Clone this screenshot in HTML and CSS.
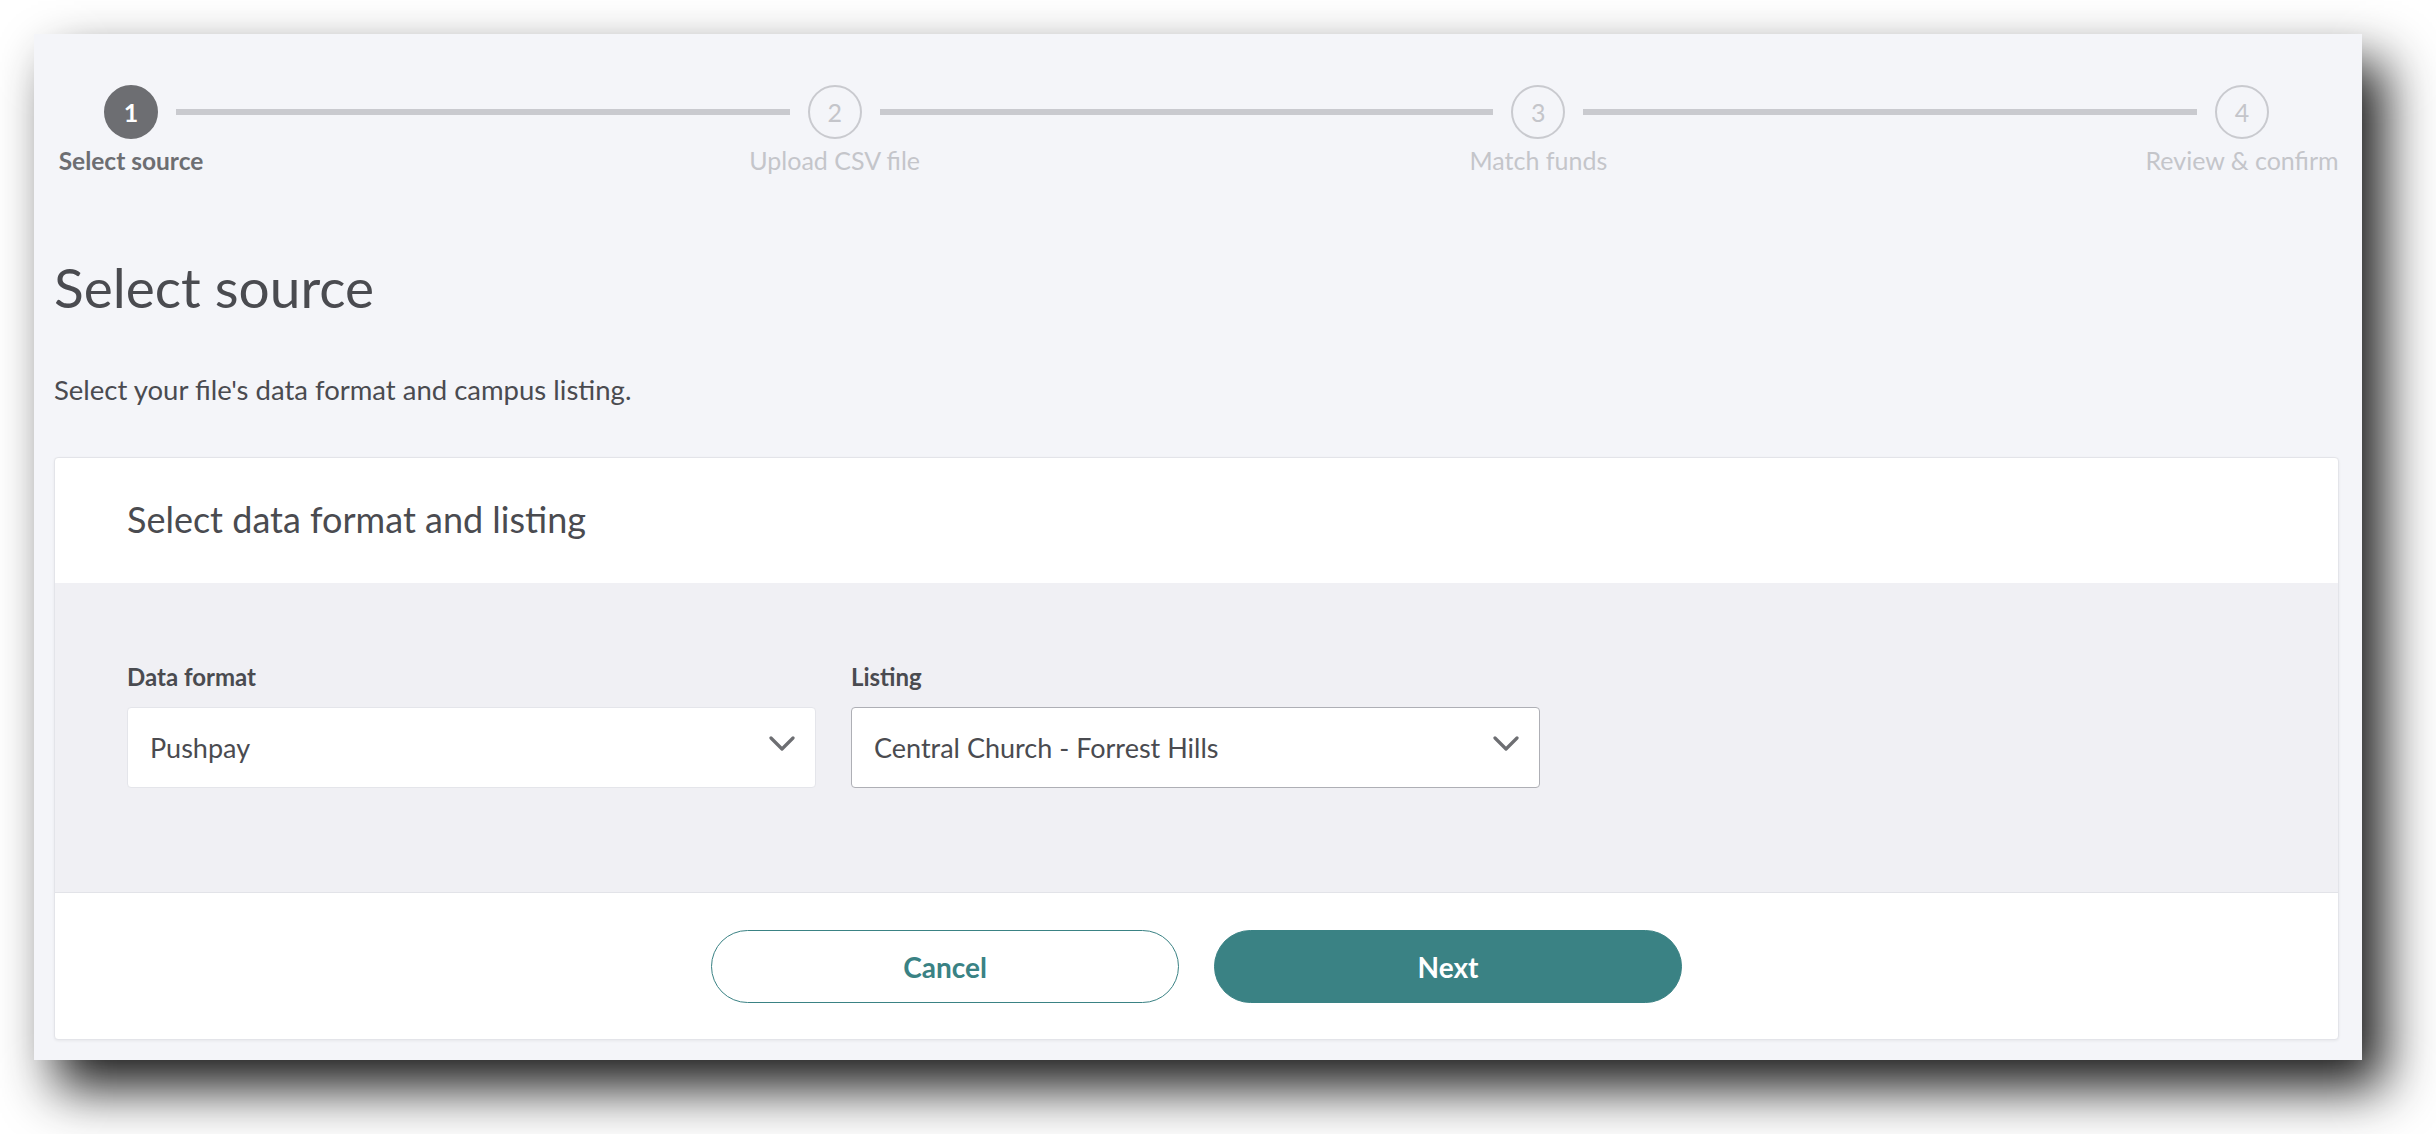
FILE: index.html
```html
<!DOCTYPE html>
<html lang="en">
<head>
<meta charset="utf-8">
<title>Select source</title>
<link rel="stylesheet" href="styles.css">
</head>
<body>
<div class="window">
  <div class="stepper">
    <div class="step active">
      <div class="circle">1</div>
      <div class="step-label">Select source</div>
    </div>
    <div class="line"></div>
    <div class="step">
      <div class="circle">2</div>
      <div class="step-label">Upload CSV file</div>
    </div>
    <div class="line"></div>
    <div class="step">
      <div class="circle">3</div>
      <div class="step-label">Match funds</div>
    </div>
    <div class="line"></div>
    <div class="step">
      <div class="circle">4</div>
      <div class="step-label">Review &amp; confirm</div>
    </div>
  </div>

  <h1 class="page-title">Select source</h1>
  <p class="page-desc">Select your file's data format and campus listing.</p>

  <div class="card">
    <div class="card-header">
      <h2 class="card-title">Select data format and listing</h2>
    </div>
    <div class="card-body">
      <div class="field">
        <div class="field-label">Data format</div>
        <div class="select">
          <span class="select-value">Pushpay</span>
          <svg class="chevron" width="26" height="16" viewBox="0 0 26 16"><polyline points="2,2 13,13 24,2" fill="none" stroke="#6d6e72" stroke-width="3.2" stroke-linecap="round" stroke-linejoin="round"/></svg>
        </div>
      </div>
      <div class="field">
        <div class="field-label">Listing</div>
        <div class="select focused">
          <span class="select-value">Central Church - Forrest Hills</span>
          <svg class="chevron" width="26" height="16" viewBox="0 0 26 16"><polyline points="2,2 13,13 24,2" fill="none" stroke="#6d6e72" stroke-width="3.2" stroke-linecap="round" stroke-linejoin="round"/></svg>
        </div>
      </div>
    </div>
    <div class="card-footer">
      <button class="btn btn-outline" type="button">Cancel</button>
      <button class="btn btn-primary" type="button">Next</button>
    </div>
  </div>
</div>
</body>
</html>
```

FILE: styles.css
```css
* { box-sizing: border-box; }

html, body {
  margin: 0;
  background: #ffffff;
}

html {
  overflow: hidden;
}

body {
  height: 1134px;
  padding: 34px;
  font-family: Lato, "Noto Sans", "Liberation Sans", sans-serif;
  color: #4a4b50;
}

.window {
  width: 2328px;
  height: 1026px;
  background: #f4f5f9;
  box-shadow: 22px 28px 50px rgba(0, 0, 0, 0.9);
  padding: 51px 23px 22px 20px;
}

/* Stepper */
.stepper {
  display: flex;
  align-items: flex-start;
  padding: 0 70px 0 50px;
}

.step {
  width: 54px;
  flex: none;
  display: flex;
  flex-direction: column;
  align-items: center;
}

.circle {
  width: 54px;
  height: 54px;
  border-radius: 50%;
  border: 2px solid #c9cacf;
  color: #c4c5ca;
  display: flex;
  align-items: center;
  justify-content: center;
  font-size: 25px;
  font-weight: 400;
}

.step.active .circle {
  background: #6d6e72;
  border-color: #6d6e72;
  color: #ffffff;
  font-weight: 700;
}

.step-label {
  margin-top: 7px;
  white-space: nowrap;
  font-size: 25px;
  line-height: 29px;
  color: #c4c5ca;
}

.step.active .step-label {
  color: #6d6e72;
  font-size: 24.5px;
  font-weight: 700;
}

.line {
  flex: 1;
  height: 6px;
  margin: 24px 18px 0;
  background: #c9cacf;
}

/* Headings */
.page-title {
  margin: 80px 0 0;
  font-size: 55px;
  line-height: 64px;
  font-weight: 400;
  color: #4a4b50;
}

.page-desc {
  margin: 55px 0 0;
  font-size: 27.5px;
  line-height: 32px;
  color: #4a4b50;
}

/* Card */
.card {
  margin-top: 51px;
  background: #ffffff;
  border: 1px solid #e3e4e9;
  border-radius: 4px;
  box-shadow: 0 1px 3px rgba(0, 0, 0, 0.06);
  overflow: hidden;
}

.card-header {
  padding: 40px 72px 43px;
}

.card-title {
  margin: 0;
  font-size: 36px;
  line-height: 42px;
  font-weight: 400;
  color: #4a4b50;
}

.card-body {
  background: #f0f0f4;
  padding: 79px 72px 104px;
  display: flex;
  gap: 35px;
}

.field {
  width: 689px;
}

.field-label {
  font-size: 24px;
  line-height: 30px;
  font-weight: 700;
  color: #4a4b50;
  margin-bottom: 15px;
}

.select {
  height: 81px;
  background: #ffffff;
  border: 1px solid #e4e5ea;
  border-radius: 4px;
  display: flex;
  align-items: center;
  justify-content: space-between;
  padding: 0 20px 0 22px;
}

.select.focused {
  border-color: #aeafb5;
}

.select-value {
  font-size: 27px;
  color: #4a4b50;
}

.chevron {
  flex: none;
  margin-top: -8px;
}

.card-footer {
  border-top: 1px solid #e2e3e8;
  padding: 37px 0 36px;
  display: flex;
  justify-content: center;
  gap: 35px;
}

.btn {
  width: 468px;
  height: 73px;
  border-radius: 37px;
  font-family: Lato, "Noto Sans", "Liberation Sans", sans-serif;
  font-size: 28px;
  font-weight: 700;
  cursor: pointer;
}

.btn-outline {
  background: #ffffff;
  border: 1px solid #3a8284;
  color: #3a8284;
}

.btn-primary {
  background: #3a8284;
  border: 1px solid #3a8284;
  color: #ffffff;
}
```
